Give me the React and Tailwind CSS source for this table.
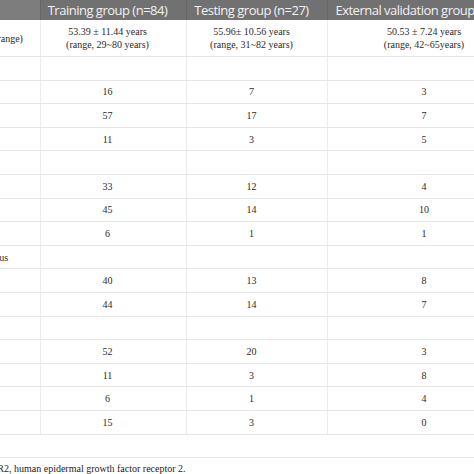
import React from 'react';

const serif = { fontFamily: '"Liberation Serif", "Times New Roman", serif' };
const sans = { fontFamily: '"Open Sans", "Noto Sans", sans-serif' };

// group rows: head = category title (no numbers)
const ROWS = [
  { label: 'Tumor size', head: true },
  { label: 'T1', v: ['16', '7', '3'] },
  { label: 'T2', v: ['57', '17', '7'] },
  { label: 'T3', v: ['11', '3', '5'] },
  { label: 'Grade', head: true },
  { label: 'I', v: ['33', '12', '4'] },
  { label: 'II', v: ['45', '14', '10'] },
  { label: 'III', v: ['6', '1', '1'] },
  { label: 'Menopausal status', head: true },
  { label: 'Premenopausal', v: ['40', '13', '8'] },
  { label: 'Postmenopausal', v: ['44', '14', '7'] },
  { label: 'Subtype', head: true },
  { label: 'Luminal A', v: ['52', '20', '3'] },
  { label: 'Luminal B', v: ['11', '3', '8'] },
  { label: 'HER2-enriched', v: ['6', '1', '4'] },
  { label: 'Triple-negative', v: ['15', '3', '0'] },
];

function Cells({ v }) {
  return (
    <>
      <div className="w-[146px] shrink-0 pr-[12px] flex items-center justify-center border-r border-[#ececec]">{v?.[0]}</div>
      <div className="w-[141px] shrink-0 pr-[11px] flex items-center justify-center border-r border-[#ececec]">{v?.[1]}</div>
      <div className="w-[203px] shrink-0 pr-[11px] flex items-center justify-center">{v?.[2]}</div>
    </>
  );
}

export default function App() {
  return (
    <div className="w-[474px] h-[474px] overflow-hidden bg-white">
      <div className="ml-[-85px] w-[616px]">
        {/* Header */}
        <div className="flex h-[20px] bg-[#717171] text-[#f2f2f2] text-[13px] tracking-[-0.5px] leading-none" style={sans}>
          <div className="w-[126px] shrink-0 bg-[#7d7d7d] border-r border-[#666]" />
          <div className="w-[146px] shrink-0 pr-[12px] flex items-center justify-center border-r border-[#666]">Training group (n=84)</div>
          <div className="w-[141px] shrink-0 pr-[11px] flex items-center justify-center border-r border-[#666]">Testing group (n=27)</div>
          <div className="w-[203px] shrink-0 pr-[11px] flex items-center justify-center whitespace-nowrap">External validation group (n=15)</div>
        </div>

        <div className="text-[10px] text-[#2b2b2b]" style={serif}>
          {/* Age */}
          <div className="flex h-[37px] border-b border-[#e6e6e6]">
            <div className="w-[126px] shrink-0 pl-[10px] flex items-center whitespace-nowrap border-r border-[#ececec]">Age (mean ± SD, range)</div>
            <div className="w-[146px] shrink-0 pr-[12px] flex flex-col items-center justify-center leading-[13px] border-r border-[#ececec]">
              <span>53.39 ± 11.44 years</span>
              <span>(range, 29~80 years)</span>
            </div>
            <div className="w-[141px] shrink-0 pr-[11px] flex flex-col items-center justify-center leading-[13px] border-r border-[#ececec]">
              <span>55.96± 10.56 years</span>
              <span>(range, 31~82 years)</span>
            </div>
            <div className="w-[203px] shrink-0 pr-[11px] flex flex-col items-center justify-center leading-[13px]">
              <span>50.53 ± 7.24 years</span>
              <span>(range, 42~65years)</span>
            </div>
          </div>

          {ROWS.map((r, i) => (
            <div key={i} className="flex h-[23.6px] border-b border-[#e6e6e6]">
              <div className={`w-[126px] shrink-0 flex items-center whitespace-nowrap border-r border-[#ececec] ${r.head ? 'pl-[19px]' : 'pl-[10px]'}`}>{r.label}</div>
              <Cells v={r.v} />
            </div>
          ))}

          {/* spacer row */}
          <div className="h-[23.6px] border-b border-[#e6e6e6]" />
        </div>

        <p className="pl-[69px] pt-[3px] text-[10px] text-[#1c1c1c] whitespace-nowrap" style={serif}>
          HER2, human epidermal growth factor receptor 2.
        </p>
      </div>
    </div>
  );
}
